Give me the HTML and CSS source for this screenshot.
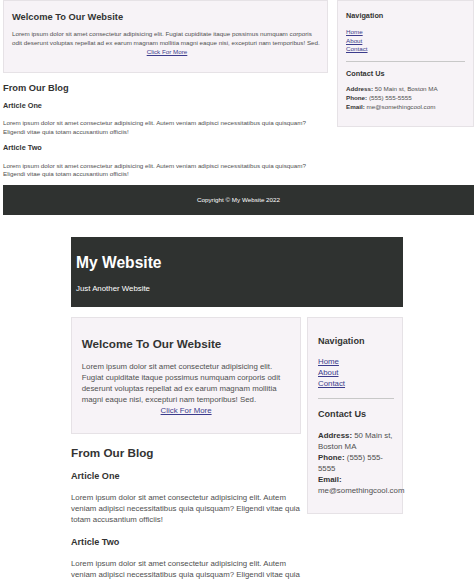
FILE: index.html
```html
<!DOCTYPE html>
<html lang="en">
<head>
<meta charset="utf-8">
<title>My Website</title>
<link rel="stylesheet" href="styles.css">
</head>
<body>
<div class="shot wide">
  <div class="layout">
    <main class="main">
      <section class="box welcome">
        <h2>Welcome To Our Website</h2>
        <p>Lorem ipsum dolor sit amet consectetur adipisicing elit. Fugiat cupiditate itaque possimus numquam corporis odit deserunt voluptas repellat ad ex earum magnam mollitia magni eaque nisi, excepturi nam temporibus! Sed. <a class="more" href="#">Click For More</a></p>
      </section>
      <section class="blog">
        <h2>From Our Blog</h2>
        <article>
          <h3>Article One</h3>
          <p>Lorem ipsum dolor sit amet consectetur adipisicing elit. Autem veniam adipisci necessitatibus quia quisquam? Eligendi vitae quia totam accusantium officiis!</p>
        </article>
        <article>
          <h3>Article Two</h3>
          <p>Lorem ipsum dolor sit amet consectetur adipisicing elit. Autem veniam adipisci necessitatibus quia quisquam? Eligendi vitae quia totam accusantium officiis!</p>
        </article>
      </section>
    </main>
    <aside class="box side">
      <h3>Navigation</h3>
      <ul class="nav">
        <li><a href="#">Home</a></li>
        <li><a href="#">About</a></li>
        <li><a href="#">Contact</a></li>
      </ul>
      <hr class="rule">
      <h3>Contact Us</h3>
      <p class="contact"><strong>Address:</strong> 50 Main st, Boston MA<br><strong>Phone:</strong> (555) 555-5555<br><strong>Email:</strong> me@somethingcool.com</p>
    </aside>
  </div>
  <footer class="dark footer"><p>Copyright &copy; My Website 2022</p></footer>
</div>

<div class="shot narrow">
  <header class="dark header">
    <h1>My Website</h1>
    <p class="tagline">Just Another Website</p>
  </header>
  <div class="layout">
    <main class="main">
      <section class="box welcome">
        <h2>Welcome To Our Website</h2>
        <p>Lorem ipsum dolor sit amet consectetur adipisicing elit. Fugiat cupiditate itaque possimus numquam corporis odit deserunt voluptas repellat ad ex earum magnam mollitia magni eaque nisi, excepturi nam temporibus! Sed. <a class="more" href="#">Click For More</a></p>
      </section>
      <section class="blog">
        <h2>From Our Blog</h2>
        <article>
          <h3>Article One</h3>
          <p>Lorem ipsum dolor sit amet consectetur adipisicing elit. Autem veniam adipisci necessitatibus quia quisquam? Eligendi vitae quia totam accusantium officiis!</p>
        </article>
        <article>
          <h3>Article Two</h3>
          <p>Lorem ipsum dolor sit amet consectetur adipisicing elit. Autem veniam adipisci necessitatibus quia quisquam? Eligendi vitae quia totam accusantium officiis!</p>
        </article>
      </section>
    </main>
    <aside class="box side">
      <h3>Navigation</h3>
      <ul class="nav">
        <li><a href="#">Home</a></li>
        <li><a href="#">About</a></li>
        <li><a href="#">Contact</a></li>
      </ul>
      <hr class="rule">
      <h3>Contact Us</h3>
      <p class="contact"><strong>Address:</strong> 50 Main st, Boston MA<br><strong>Phone:</strong> (555) 555-5555<br><strong>Email:</strong> me@somethingcool.com</p>
    </aside>
  </div>
</div>
</body>
</html>
```
FILE: styles.css
```css
* { box-sizing: border-box; }
html, body { margin: 0; padding: 0; background: #fff; }
body {
  font-family: "Liberation Sans", Arial, sans-serif;
  color: #505050;
  height: 579px;
  overflow: hidden;
}
h1, h2, h3, p, ul { margin: 0; padding: 0; }
h1, h2, h3 { color: #333; font-weight: bold; line-height: 1.15; }
strong { color: #333; }
a { color: #3c3c8c; text-decoration: underline; }
.more { display: block; text-align: center; }
.nav { list-style: none; }
.box { background: #f7f3f7; border: 1px solid #e6e2e6; }
.rule { border: 0; border-top: 1px solid #c8c8c8; height: 0; }
.dark { background: #2f3230; color: #fff; }
.dark h1, .dark p { color: #fff; font-weight: normal; }
.dark h1 { font-weight: bold; }
.layout { display: flex; align-items: flex-start; }

/* wide (top) rendering */
.wide { margin-left: 3px; width: 471px; font-size: 6.25px; line-height: 8.8px; }
.wide .layout { gap: 9px; }
.wide .main { width: 325px; }
.wide .welcome { padding: 11px 5px 15.5px 8px; }
.wide h2 { font-size: 9.3px; line-height: 10.7px; }
.wide h3 { font-size: 7.3px; line-height: 8.4px; }
.wide .welcome p { margin-top: 7.4px; }
.wide .blog { margin-top: 10px; }
.wide .blog h2 { margin-bottom: 8.1px; }
.wide article h3 { margin-bottom: 8.9px; }
.wide article + article { margin-top: 7.6px; }
.wide .side { flex: 1; padding: 10.5px 8px 14.5px; }
.wide .nav { margin-top: 7.9px; }
.wide .rule { margin: 6.8px 0 8.5px; }
.wide .contact { margin-top: 6.2px; }
.wide .footer {
  margin-top: 5.8px;
  height: 30px;
  display: flex;
  align-items: center;
  justify-content: center;
}

/* narrow (bottom) rendering */
.narrow { margin: 22px 0 0 71px; width: 332px; font-size: 7.85px; line-height: 11px; }
.narrow .header { height: 70px; padding: 16.9px 5px 0; }
.narrow h1 { font-size: 15.6px; line-height: 18px; }
.narrow .tagline { margin-top: 11.4px; }
.narrow .layout { gap: 6px; margin-top: 10px; }
.narrow .main { width: 230px; }
.narrow .welcome { padding: 19px 9.5px 17.2px 9.7px; }
.narrow h2 { font-size: 11.7px; line-height: 13.5px; }
.narrow h3 { font-size: 9.1px; line-height: 10.5px; }
.narrow .welcome p { margin-top: 10.3px; }
.narrow .blog { margin-top: 11.7px; }
.narrow .blog h2 { margin-bottom: 12.3px; }
.narrow article h3 { margin-bottom: 10.4px; }
.narrow article + article { margin-top: 11.4px; }
.narrow .side { width: 96px; padding: 18.2px 8px 16.9px 10px; }
.narrow .nav { margin-top: 9.8px; }
.narrow .rule { margin: 8.8px 0 10.1px; }
.narrow .contact { margin-top: 10.2px; }
```
